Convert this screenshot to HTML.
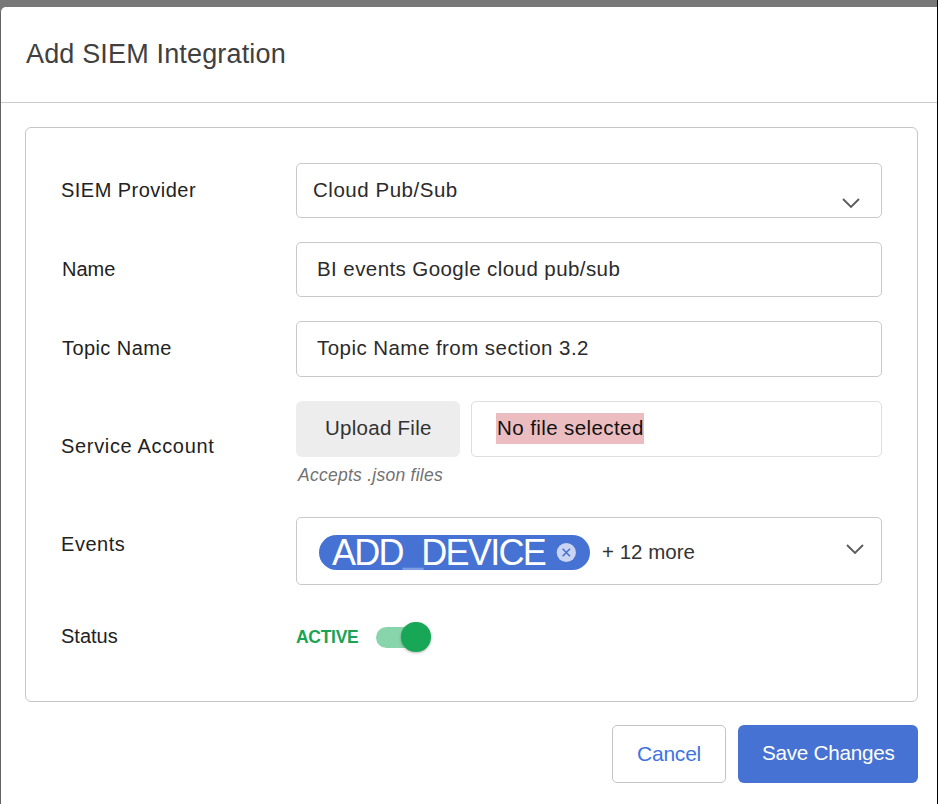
<!DOCTYPE html>
<html><head><meta charset="utf-8">
<style>
html,body{margin:0;padding:0;}
body{width:938px;height:804px;overflow:hidden;background:#787878;position:relative;font-family:"Liberation Sans",sans-serif;}
.a{position:absolute;}
.t{position:absolute;white-space:nowrap;line-height:1;}
#topband{left:0;top:0;width:938px;height:7px;background:#787878;}
#leftedge{left:0;top:12px;width:1px;height:792px;background:#636363;}
#rightedge{left:937px;top:0;width:1px;height:804px;background:#000;}
#dialog{left:1px;top:7px;width:936px;height:797px;background:#fff;border-top-left-radius:5px;}
#hline{left:1px;top:102px;width:936px;height:1px;background:#cacaca;}
#card{left:25px;top:127px;width:891px;height:573px;border:1px solid #c6c6c6;border-radius:6px;}
.box{position:absolute;box-sizing:border-box;border:1px solid #c9c9c9;border-radius:5px;background:#fff;}
.lbl{color:#222;font-size:20px;}
.val{color:#2b2b2b;font-size:20.5px;}
.chev{position:absolute;}
</style></head>
<body>
<div class="a" id="dialog"></div>
<div class="a" id="leftedge"></div>
<div class="a" id="rightedge"></div>
<div class="t" id="title" style="left:26px;top:41px;font-size:27px;letter-spacing:0.16px;color:#404040;">Add SIEM Integration</div>
<div class="a" id="hline"></div>
<div class="a" id="card"></div>

<!-- labels -->
<div class="t lbl" style="left:61px;top:180px;letter-spacing:0.47px;">SIEM Provider</div>
<div class="t lbl" style="left:62px;top:259px;">Name</div>
<div class="t lbl" style="left:62px;top:338px;letter-spacing:0.42px;">Topic Name</div>
<div class="t lbl" style="left:61px;top:436px;letter-spacing:0.67px;">Service Account</div>
<div class="t lbl" style="left:61px;top:534px;letter-spacing:0.54px;">Events</div>
<div class="t lbl" style="left:61px;top:626px;">Status</div>

<!-- select -->
<div class="box" style="left:296px;top:163px;width:586px;height:55px;"></div>
<div class="t val" style="left:313px;top:180px;letter-spacing:0.53px;">Cloud Pub/Sub</div>
<svg class="chev" style="left:841px;top:197px;" width="20" height="12" viewBox="0 0 20 12"><path d="M2 2 L10 10 L18 2" fill="none" stroke="#5c5c5c" stroke-width="1.9"/></svg>

<!-- name -->
<div class="box" style="left:296px;top:242px;width:586px;height:55px;"></div>
<div class="t val" style="left:317px;top:259px;letter-spacing:0.42px;">BI events Google cloud pub/sub</div>

<!-- topic -->
<div class="box" style="left:296px;top:321px;width:586px;height:56px;"></div>
<div class="t val" style="left:317px;top:338px;letter-spacing:0.45px;">Topic Name from section 3.2</div>

<!-- upload -->
<div class="a" style="left:296px;top:401px;width:164px;height:56px;background:#ededed;border-radius:6px;"></div>
<div class="t val" style="left:325px;top:418px;color:#333;letter-spacing:0.27px;">Upload File</div>
<div class="box" style="left:471px;top:401px;width:411px;height:56px;border-color:#dedede;"></div>
<div class="a" style="left:496px;top:413px;width:148px;height:31px;background:#ecbdc0;"></div>
<div class="t val" style="left:497px;top:418px;color:#111;letter-spacing:0.41px;">No file selected</div>
<div class="t" style="left:298px;top:467px;font-size:17.5px;letter-spacing:0.26px;font-style:italic;color:#727272;">Accepts .json files</div>

<!-- events -->
<div class="box" style="left:296px;top:517px;width:586px;height:68px;"></div>
<div class="a" style="left:319px;top:535px;width:271px;height:35px;background:#4672d4;border-radius:18px;"></div>
<div class="t" style="left:332px;top:535px;font-size:36px;color:#fff;letter-spacing:-1.7px;">ADD<span style="opacity:.3;position:relative;top:-2px;">_</span>DEVICE</div>
<svg class="a" style="left:556px;top:542px;" width="21" height="21" viewBox="0 0 21 21"><circle cx="10.3" cy="10.5" r="9.6" fill="#c9d5f2"/><path d="M6.6 6.8 L14 14.2 M14 6.8 L6.6 14.2" stroke="#4672d4" stroke-width="1.6" fill="none"/></svg>
<div class="t val" style="left:602px;top:542px;color:#333;">+ 12 more</div>
<svg class="chev" style="left:845px;top:543px;" width="20" height="14" viewBox="0 0 20 14"><path d="M2 2 L10 10 L18 2" fill="none" stroke="#5c5c5c" stroke-width="1.9"/></svg>

<!-- status -->
<div class="t" style="left:296px;top:629px;font-size:17.5px;font-weight:bold;letter-spacing:-0.3px;color:#1aa354;">ACTIVE</div>
<div class="a" style="left:376px;top:627px;width:52px;height:21px;border-radius:11px;background:#89d5ab;"></div>
<div class="a" style="left:401px;top:622px;width:29.5px;height:29.5px;border-radius:50%;background:#17a757;box-shadow:0 1px 3px rgba(0,0,0,0.28);"></div>

<!-- buttons -->
<div class="box" style="left:612px;top:725px;width:114px;height:58px;border-color:#c4c4c4;"></div>
<div class="t" style="left:637px;top:743px;font-size:21px;letter-spacing:-0.22px;color:#3e73e3;">Cancel</div>
<div class="a" style="left:738px;top:725px;width:180px;height:58px;background:#4672d4;border-radius:6px;"></div>
<div class="t" style="left:762px;top:743px;font-size:20.7px;letter-spacing:-0.27px;color:#fff;">Save Changes</div>
</body></html>
